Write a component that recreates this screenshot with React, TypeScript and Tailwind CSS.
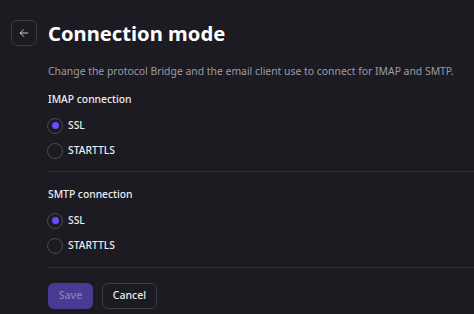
import React from "react";

function Radio({ checked, label }: { checked?: boolean; label: string }) {
  return (
    <div className="flex items-center h-[25px] -ml-px">
      <div className="w-[16px] h-[16px] rounded-full border border-[#4a4952] flex items-center justify-center bg-[#1c1b22]">
        {checked && <div className="w-[7px] h-[7px] rounded-full bg-[#6d4aff]" />}
      </div>
      <span className="ml-[5px] text-[10.3px] font-medium text-[#ececf2]">{label}</span>
    </div>
  );
}

export default function App() {
  return (
    <div
      className="w-[474px] h-[314px] bg-[#1c1b22] overflow-hidden text-white"
      style={{ fontFamily: '"Noto Sans", sans-serif' }}
    >
      <div className="flex items-center pt-[20px] pl-[11px]">
        <div className="w-[26px] h-[26px] rounded-[6px] border border-[#3a3942] flex items-center justify-center">
          <svg width="10" height="10" viewBox="0 0 12 12" fill="none" stroke="#d8d8e0" strokeWidth="1.1" strokeLinecap="round" strokeLinejoin="round">
            <path d="M10.5 6H1.5M5.5 2L1.5 6l4 4" />
          </svg>
        </div>
        <h1 className="ml-[11px] text-[20.2px] font-bold leading-[26px] text-white">Connection mode</h1>
      </div>
      <div className="pl-[48px]">
        <p className="mt-[17px] text-[10.4px] text-[#9c9ba5] leading-[16px] whitespace-nowrap">
          Change the protocol Bridge and the email client use to connect for IMAP and SMTP.
        </p>
        <div className="mt-[12px] text-[10.3px] font-medium leading-[16px] text-[#ececf2]">IMAP connection</div>
        <div className="mt-[6px] flex flex-col">
          <Radio checked label="SSL" />
          <Radio label="STARTTLS" />
        </div>
        <div className="mt-[8px] h-px bg-[#2e2d35]" />
        <div className="mt-[14px] text-[10.3px] font-medium leading-[16px] text-[#ececf2]">SMTP connection</div>
        <div className="mt-[6px] flex flex-col">
          <Radio checked label="SSL" />
          <Radio label="STARTTLS" />
        </div>
        <div className="mt-[9px] h-px bg-[#2e2d35]" />
        <div className="mt-[15px] flex gap-[9px]">
          <button className="h-[26px] w-[45px] rounded-[6px] bg-[#4a3a94] text-[10.5px] font-medium text-[#8b80b8]">Save</button>
          <button className="h-[26px] w-[55px] rounded-[6px] border border-[#3d3c45] text-[10.5px] font-medium text-[#ececf2]">Cancel</button>
        </div>
      </div>
    </div>
  );
}
